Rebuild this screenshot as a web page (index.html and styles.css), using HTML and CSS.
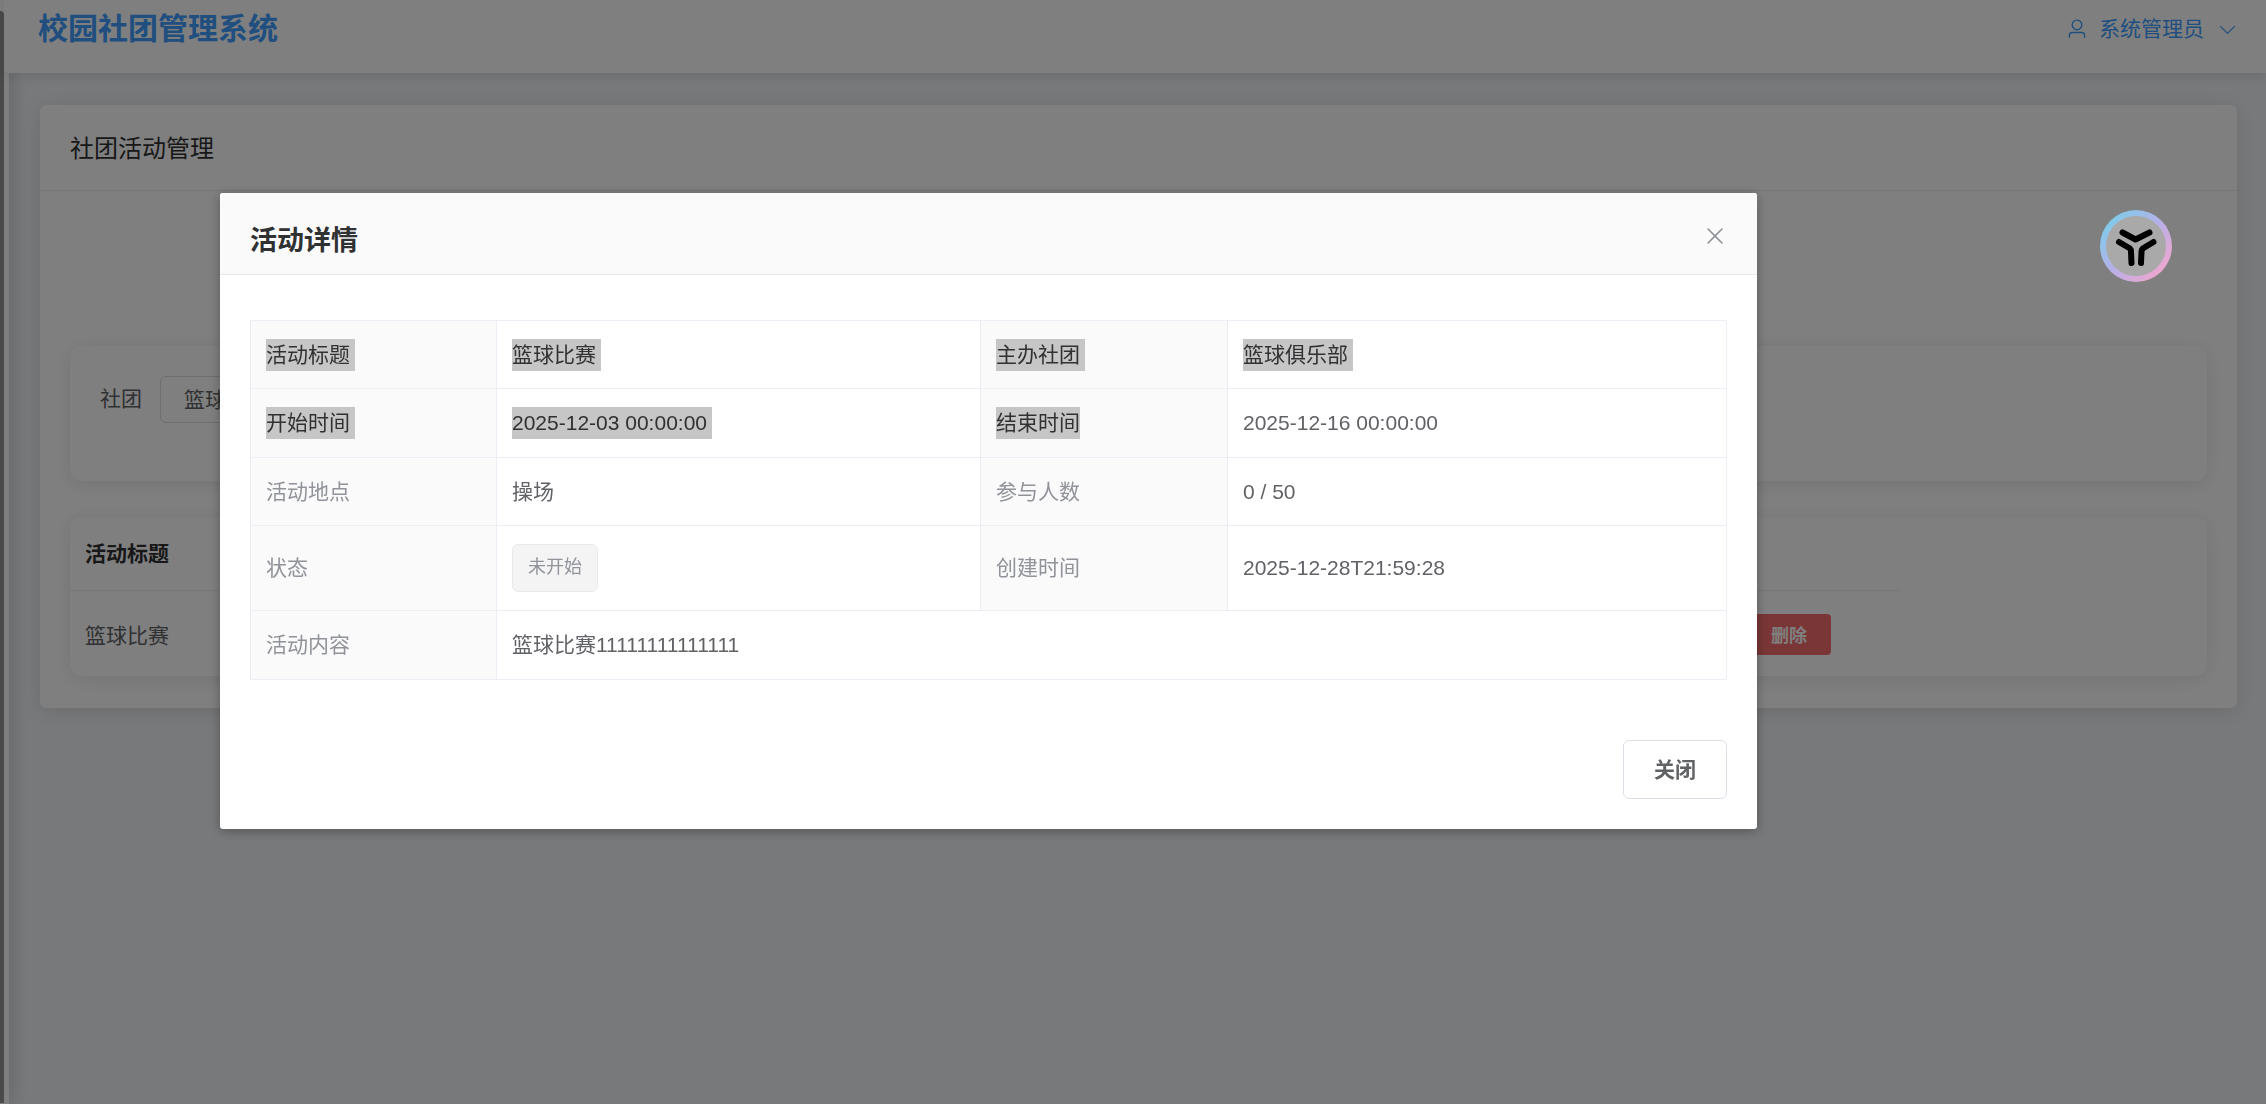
FILE: index.html
```html
<!DOCTYPE html>
<html lang="zh-CN">
<head>
    <meta charset="UTF-8">
    <meta name="viewport" content="width=device-width, initial-scale=1.0">
    <title>校园社团管理系统</title>
    <link rel="stylesheet" href="styles.css">
</head>
<body>
    <div class="layout">
        <div class="rail"><div class="rail-thumb"></div></div>
        <div class="page">
            <header class="topbar">
                <div class="brand">校园社团管理系统</div>
                <div class="user">
                    <svg class="user-icon" viewBox="0 0 1024 1024"><path fill="currentColor" d="M512 512a192 192 0 1 0 0-384 192 192 0 0 0 0 384m0 64a256 256 0 1 1 0-512 256 256 0 0 1 0 512m320 320v-96a96 96 0 0 0-96-96H288a96 96 0 0 0-96 96v96a32 32 0 1 1-64 0v-96a160 160 0 0 1 160-160h448a160 160 0 0 1 160 160v96a32 32 0 1 1-64 0"/></svg>
                    <span>系统管理员</span>
                    <svg class="user-arrow" viewBox="0 0 1024 1024"><path fill="currentColor" d="M831.872 340.864 512 652.672 192.128 340.864a30.592 30.592 0 0 0-42.752 0 29.12 29.12 0 0 0 0 41.6L489.664 714.24a32 32 0 0 0 44.672 0l340.288-331.712a29.12 29.12 0 0 0 0-41.6 30.592 30.592 0 0 0-42.752 0z"/></svg>
                </div>
            </header>
            <main class="content">
                <section class="card">
                    <div class="card-head">社团活动管理</div>
                    <div class="card-body">
                        <div class="panel filter">
                            <label class="filter-label">社团</label>
                            <div class="filter-select">篮球俱乐部</div>
                        </div>
                        <div class="panel list">
                            <div class="list-head">活动标题</div>
                            <div class="list-row">
                                <span>篮球比赛</span>
                                <button class="btn-delete">删除</button>
                            </div>
                        </div>
                    </div>
                </section>
            </main>
        </div>
    </div>

    <div class="overlay">
        <div class="dialog">
            <div class="dialog-head">
                <span class="dialog-title">活动详情</span>
                <svg class="dialog-close" viewBox="0 0 1024 1024"><path fill="currentColor" d="M764.288 214.592 512 466.88 259.712 214.592a31.936 31.936 0 0 0-45.12 45.12L466.752 512 214.528 764.224a31.936 31.936 0 1 0 45.12 45.184L512 557.184l252.288 252.288a31.936 31.936 0 0 0 45.12-45.12L557.12 512.064l252.288-252.352a31.936 31.936 0 1 0-45.12-45.184z"/></svg>
            </div>
            <div class="dialog-body">
                <table class="detail">
                    <colgroup>
                        <col class="col-label-a">
                        <col class="col-value-a">
                        <col class="col-label-b">
                        <col class="col-value-b">
                    </colgroup>
                    <tr class="row-a">
                        <th><span class="sel">活动标题</span></th>
                        <td><span class="sel">篮球比赛</span></td>
                        <th><span class="sel">主办社团</span></th>
                        <td><span class="sel">篮球俱乐部</span></td>
                    </tr>
                    <tr class="row-b">
                        <th><span class="sel">开始时间</span></th>
                        <td><span class="sel">2025-12-03 00:00:00</span></td>
                        <th><span class="sel sel-end">结束时间</span></th>
                        <td>2025-12-16 00:00:00</td>
                    </tr>
                    <tr class="row-a">
                        <th>活动地点</th>
                        <td>操场</td>
                        <th>参与人数</th>
                        <td>0 / 50</td>
                    </tr>
                    <tr class="row-c">
                        <th>状态</th>
                        <td><span class="tag">未开始</span></td>
                        <th>创建时间</th>
                        <td>2025-12-28T21:59:28</td>
                    </tr>
                    <tr class="row-b">
                        <th>活动内容</th>
                        <td colspan="3">篮球比赛11111111111111</td>
                    </tr>
                </table>
            </div>
            <div class="dialog-foot">
                <button class="btn-close">关闭</button>
            </div>
        </div>
    </div>

    <div class="assistant">
        <svg viewBox="0 0 60 60" class="assistant-mark">
            <g fill="none" stroke="#000" stroke-width="6" stroke-linecap="round" stroke-linejoin="round">
                <path d="M16.5 16.5 29.5 23.5 43.5 16.5"/>
                <path d="M13 26 24 32.5 C25 33.3 25 34.5 25 36 L25.5 47"/>
                <path d="M47.5 26 37.5 32 C36 33 35.5 34.5 35.5 36 L35 47"/>
            </g>
        </svg>
    </div>
</body>
</html>
```

FILE: styles.css
```css
* {
    box-sizing: border-box;
}
html, body {
    margin: 0;
    height: 100%;
    overflow: hidden;
}
body {
    font-family: "Liberation Sans", "Noto Sans CJK SC", sans-serif;
    font-size: 21px;
    color: #303133;
    background-color: #f0f2f5;
}

/* page behind the dialog */
.layout {
    display: flex;
    height: 1104px;
}
.rail {
    width: 9px;
    flex: none;
    background-color: #fff;
    box-shadow: 3px 0 15px rgba(0, 21, 41, 0.2);
    position: relative;
    z-index: 1;
}
.rail-thumb {
    width: 4px;
    height: 1092px;
    margin-top: 11px;
    background-color: #949494;
    border-radius: 0 4px 0 0;
}
.page {
    flex: 1;
    min-width: 0;
}
.topbar {
    height: 73px;
    display: flex;
    align-items: center;
    justify-content: space-between;
    padding: 0 28px 15px 34px;
    background-color: #fff;
    box-shadow: 0 2px 12px rgba(0, 21, 41, 0.12);
    margin-left: -5px;
    position: relative;
    z-index: 2;
}
.brand {
    font-size: 30px;
    line-height: 30px;
    font-weight: 700;
    color: #409eff;
}
.user {
    display: flex;
    align-items: center;
    color: #409eff;
}
.user span {
    line-height: 30px;
    margin-left: 11px;
}
.user-icon {
    width: 22px;
    height: 22px;
}
.user-arrow {
    width: 21px;
    height: 21px;
    margin-left: 13px;
}
.content {
    padding: 32px 29px 0 31px;
}
.card {
    height: 603px;
    background-color: #fff;
    border-radius: 6px;
    box-shadow: 0 3px 18px rgba(0, 0, 0, 0.1);
}
.card-head {
    height: 86px;
    padding: 2px 30px 0;
    line-height: 84px;
    font-size: 24px;
    border-bottom: 1px solid #ebeef5;
}
.card-body {
    padding: 155px 30px 0;
    display: flex;
    flex-direction: column;
    gap: 36px;
}
.panel {
    background-color: #fff;
    border-radius: 12px;
    box-shadow: 0 3px 18px rgba(0, 0, 0, 0.1);
}
.filter {
    height: 135px;
    padding: 30px 30px 0;
    display: flex;
    align-items: flex-start;
    gap: 18px;
}
.filter-label {
    line-height: 46px;
    color: #606266;
}
.filter-select {
    width: 360px;
    height: 47px;
    line-height: 45px;
    padding: 0 23px;
    color: #606266;
    border: 1px solid #dcdfe6;
    border-radius: 6px;
}
.list {
    height: 159px;
}
.list-head {
    width: 1830px;
    height: 74px;
    padding: 0 15px;
    line-height: 74px;
    font-weight: 700;
    color: #303133;
    border-bottom: 1px solid #ebeef5;
}
.list-row {
    height: 85px;
    padding: 0 0 0 15px;
    display: flex;
    align-items: center;
    justify-content: space-between;
    color: #606266;
}
.btn-delete {
    width: 84px;
    height: 41px;
    margin-top: 1px;
    margin-right: 376px;
    border: none;
    border-radius: 4px;
    background-color: #f56c6c;
    color: #fff;
    font: 700 18px "Liberation Sans", "Noto Sans CJK SC", sans-serif;
}

/* dialog */
.overlay {
    position: fixed;
    top: 0;
    left: 0;
    right: 0;
    bottom: 0;
    z-index: 10;
    padding: 193px 0 0 220px;
    background-color: rgba(0, 0, 0, 0.5);
}
.dialog {
    width: 1537px;
    height: 636px;
    background-color: #fff;
    border-radius: 3px;
    box-shadow: 0 2px 12px rgba(0, 0, 0, 0.3);
}
.dialog-head {
    height: 82px;
    padding: 0 29px 0 30px;
    display: flex;
    align-items: center;
    justify-content: space-between;
    background-color: #fafafa;
    border-bottom: 1px solid #e8e8e8;
    border-radius: 3px 3px 0 0;
}
.dialog-title {
    font-size: 27px;
    line-height: 40px;
    font-weight: 700;
    color: #303133;
    margin-top: 14px;
}
.dialog-close {
    width: 26px;
    height: 26px;
    color: #909399;
    margin-top: 4px;
}
.dialog-body {
    padding: 45px 30px 0;
}
.detail {
    width: 1477px;
    table-layout: fixed;
    border-collapse: collapse;
    line-height: 32px;
}
.col-label-a {
    width: 246px;
}
.col-value-a {
    width: 484px;
}
.col-label-b {
    width: 247px;
}
.detail th, .detail td {
    padding: 0 15px;
    border: 1px solid #ebeef5;
    text-align: left;
    font-weight: 400;
}
.detail th {
    background-color: #fafafa;
    color: #909399;
}
.detail td {
    color: #606266;
}
.row-a {
    height: 68px;
}
.row-b {
    height: 69px;
}
.row-c {
    height: 85px;
}
.sel {
    display: inline-block;
    padding-right: 5px;
    background-color: #c6c6c6;
    color: #303133;
}
.sel-end {
    padding-right: 0;
}
.tag {
    display: inline-block;
    height: 48px;
    padding: 0 15px;
    line-height: 44px;
    font-size: 18px;
    color: #909399;
    background-color: #f4f4f5;
    border: 1px solid #e9e9eb;
    border-radius: 6px;
    vertical-align: middle;
}
.dialog-foot {
    padding: 60px 30px 0;
    display: flex;
    justify-content: flex-end;
}
.btn-close {
    width: 104px;
    height: 59px;
    padding: 0 0 4px;
    background-color: #fff;
    border: 1px solid #dcdfe6;
    border-radius: 6px;
    color: #606266;
    font: 700 21px "Liberation Sans", "Noto Sans CJK SC", sans-serif;
}

/* floating assistant button, sits over the mask */
.assistant {
    position: fixed;
    top: 210px;
    left: 2100px;
    z-index: 20;
    width: 72px;
    height: 72px;
    padding: 6px;
    border-radius: 50%;
    background: linear-gradient(135deg, #7ccdea 10%, #b7b0e8 50%, #f2a6cc 90%);
}
.assistant-mark {
    display: block;
    width: 60px;
    height: 60px;
    border-radius: 50%;
    background-color: #a9a9a9;
}
```
